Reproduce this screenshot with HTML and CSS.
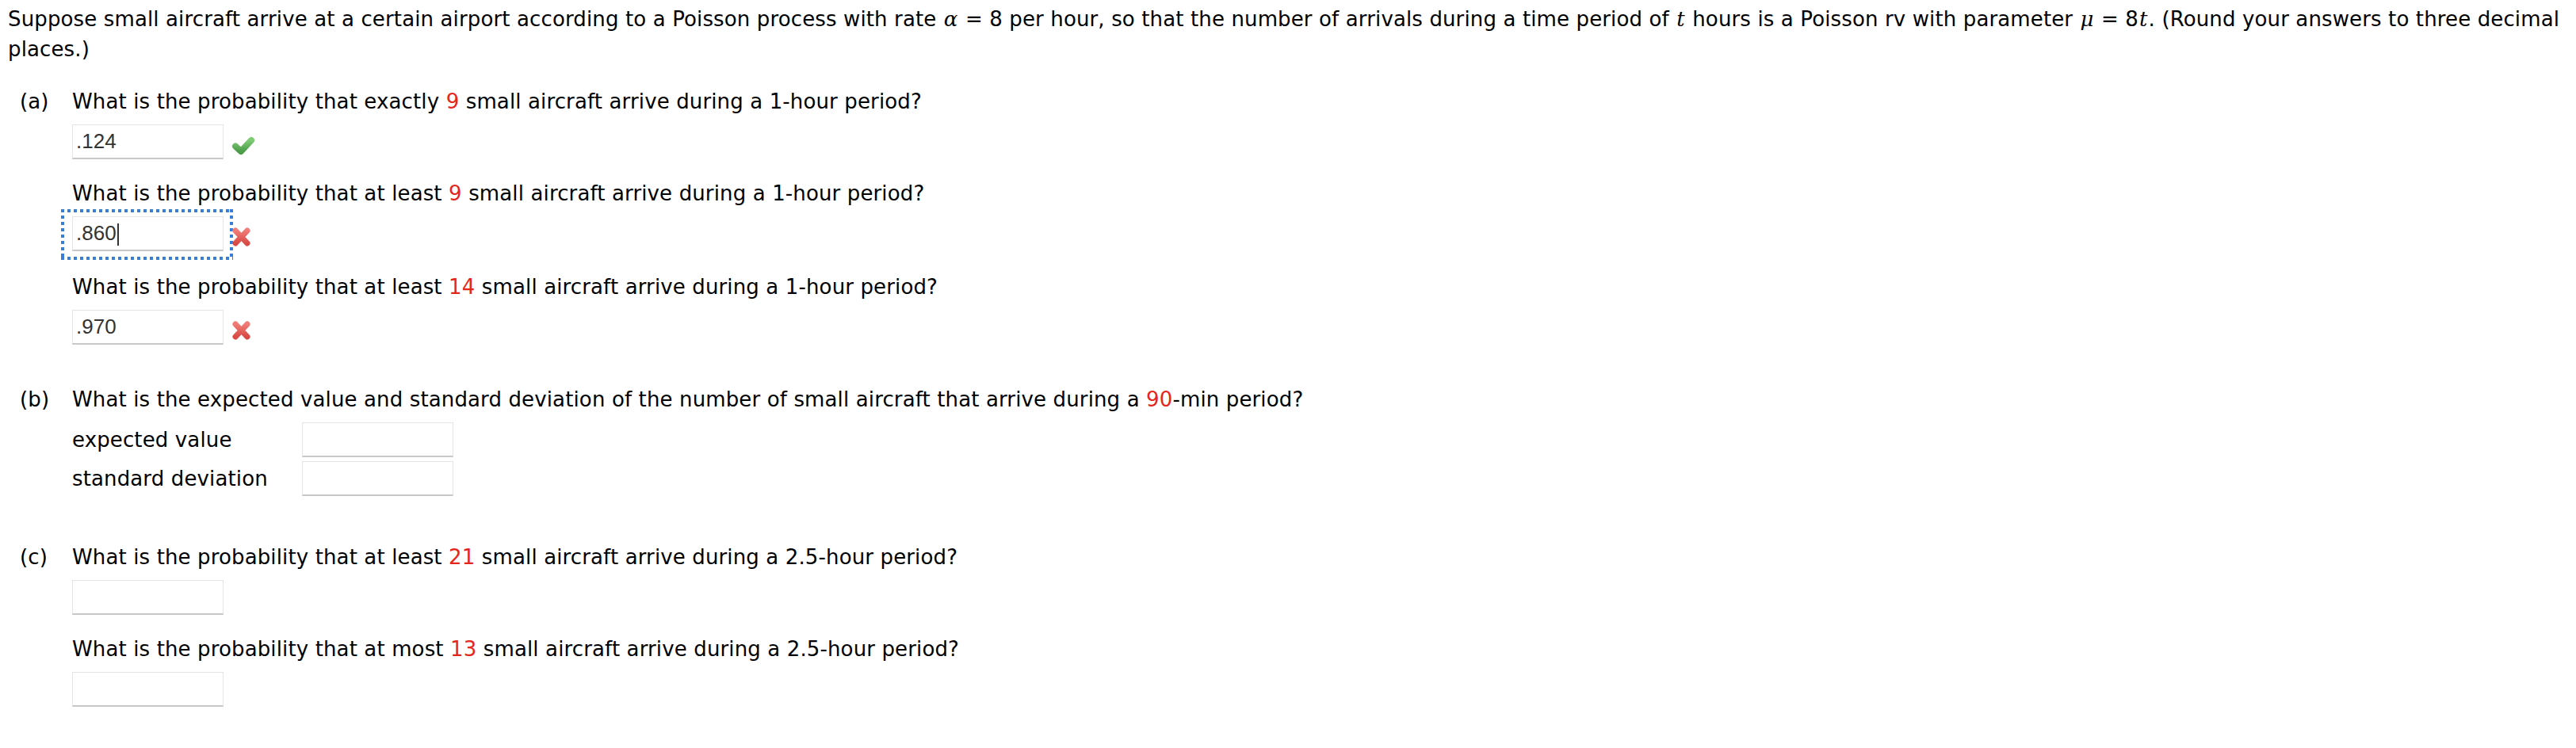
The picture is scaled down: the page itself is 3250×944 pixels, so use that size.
FILE: index.html
```html
<!DOCTYPE html>
<html lang="en">
<head>
<meta charset="utf-8">
<title>Poisson process question</title>
<link rel="stylesheet" href="styles.css">
</head>
<body>
<div class="page">
  <p class="intro">Suppose small aircraft arrive at a certain airport according to a Poisson process with rate <i class="var">α</i> = 8 per hour, so that the number of arrivals during a time period of <i class="var">t</i> hours is a Poisson rv with parameter <i class="var">μ</i> = 8<i class="var">t</i>. (Round your answers to three decimal places.)</p>

  <div class="part part-a">
    <div class="part-label">(a)</div>
    <div class="part-body">
      <p class="q">What is the probability that exactly <span class="num">9</span> small aircraft arrive during a 1-hour period?</p>
      <div class="answer">
        <input class="field" type="text" value=".124">
        <svg class="mark mark-ok" width="30" height="25" viewBox="0 0 30 25" aria-label="correct">
          <defs><linearGradient id="gOk" x1="0" y1="0" x2="0" y2="1"><stop offset="0" stop-color="#80cc75"/><stop offset="1" stop-color="#4c9c49"/></linearGradient></defs>
          <polyline points="5,13.5 12,20 25,6" fill="none" stroke="url(#gOk)" stroke-width="8" stroke-linecap="round" stroke-linejoin="round"/>
        </svg>
      </div>
      <p class="q">What is the probability that at least <span class="num">9</span> small aircraft arrive during a 1-hour period?</p>
      <div class="answer answer-focus">
        <span class="focus-ring">
          <input class="field" type="text" value=".860">
          <span class="caret"></span>
        </span>
        <svg class="mark mark-bad" width="25" height="28" viewBox="0 0 25 28" aria-label="incorrect">
          <defs><linearGradient id="gBad1" x1="0" y1="0" x2="0" y2="1"><stop offset="0" stop-color="#f07c78"/><stop offset="1" stop-color="#d94a45"/></linearGradient></defs>
          <path d="M5 6 L20 22 M20 6 L5 22" fill="none" stroke="url(#gBad1)" stroke-width="7" stroke-linecap="round"/>
        </svg>
      </div>
      <p class="q">What is the probability that at least <span class="num">14</span> small aircraft arrive during a 1-hour period?</p>
      <div class="answer">
        <input class="field" type="text" value=".970">
        <svg class="mark mark-bad" width="25" height="28" viewBox="0 0 25 28" aria-label="incorrect">
          <defs><linearGradient id="gBad2" x1="0" y1="0" x2="0" y2="1"><stop offset="0" stop-color="#f07c78"/><stop offset="1" stop-color="#d94a45"/></linearGradient></defs>
          <path d="M5 6 L20 22 M20 6 L5 22" fill="none" stroke="url(#gBad2)" stroke-width="7" stroke-linecap="round"/>
        </svg>
      </div>
    </div>
  </div>

  <div class="part part-b">
    <div class="part-label">(b)</div>
    <div class="part-body">
      <p class="q">What is the expected value and standard deviation of the number of small aircraft that arrive during a <span class="num">90</span>-min period?</p>
      <div class="pairs">
        <span class="pair-label">expected value</span>
        <input class="field" type="text" value="">
        <span class="pair-label">standard deviation</span>
        <input class="field" type="text" value="">
      </div>
    </div>
  </div>

  <div class="part part-c">
    <div class="part-label">(c)</div>
    <div class="part-body">
      <p class="q">What is the probability that at least <span class="num">21</span> small aircraft arrive during a 2.5-hour period?</p>
      <div class="answer">
        <input class="field" type="text" value="">
      </div>
      <p class="q">What is the probability that at most <span class="num">13</span> small aircraft arrive during a 2.5-hour period?</p>
      <div class="answer">
        <input class="field" type="text" value="">
      </div>
    </div>
  </div>
</div>
</body>
</html>
```

FILE: styles.css
```css
html, body {
  margin: 0;
  padding: 0;
  background: #ffffff;
}

.page {
  padding: 5px 10px 0 10px;
  font-family: "DejaVu Sans", Verdana, sans-serif;
  font-size: 26px;
  line-height: 38px;
  letter-spacing: 0.13px;
  color: #000000;
}

.intro {
  margin: 0;
}

.var {
  font-family: "DejaVu Serif", "Liberation Serif", serif;
  font-style: italic;
  padding: 0 1px;
}

.num {
  color: #e5261d;
}

.part {
  display: flex;
  align-items: flex-start;
}

.part-a { margin-top: 28px; }
.part-b { margin-top: 26px; }
.part-c { margin-top: 58px; }

.part-label {
  width: 81px;
  flex: 0 0 81px;
  box-sizing: border-box;
  padding-left: 15px;
}

.part-body {
  flex: 1 1 auto;
}

.q {
  margin: 0;
}

.answer {
  display: flex;
  align-items: flex-end;
  gap: 10px;
  margin: 10px 0 24px 0;
}

.answer-focus {
  margin-bottom: 26px;
}

.field {
  box-sizing: border-box;
  width: 191px;
  height: 44px;
  margin: 0;
  padding: 0 4px;
  border: 1px solid #e4e4e4;
  border-bottom: 2px solid #c8c8c8;
  border-radius: 0;
  background: #ffffff;
  font-family: "Liberation Sans", Arial, sans-serif;
  font-size: 26px;
  letter-spacing: 0;
  color: #333333;
  outline: none;
}

.focus-ring {
  position: relative;
  display: inline-flex;
  padding: 9px 12px 11px 14px;
  margin: -9px -12px -11px -14px;
  background:
    linear-gradient(90deg, #3a7dd8 4px, transparent 4px) 0 0 / 8px 4px repeat-x,
    linear-gradient(90deg, #3a7dd8 4px, transparent 4px) 0 100% / 8px 4px repeat-x,
    linear-gradient(180deg, #3a7dd8 4px, transparent 4px) 0 0 / 4px 8px repeat-y,
    linear-gradient(180deg, #3a7dd8 4px, transparent 4px) 100% 0 / 4px 8px repeat-y;
}

.caret {
  position: absolute;
  left: 71px;
  top: 18px;
  width: 2px;
  height: 28px;
  background: #333333;
}

.mark {
  display: block;
  flex: 0 0 auto;
}

.mark-ok { margin-bottom: 5px; }
.mark-bad { margin-bottom: 4px; position: relative; }

.pairs {
  display: grid;
  grid-template-columns: 290px 191px;
  grid-auto-rows: 44px;
  row-gap: 5px;
  align-items: center;
  margin-top: 10px;
}
```
